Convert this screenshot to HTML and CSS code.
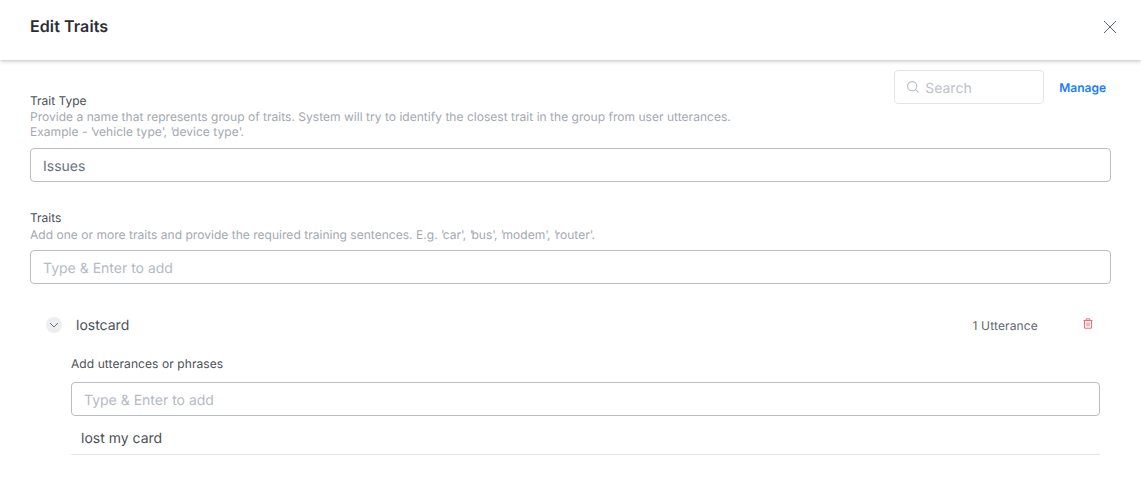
FILE: index.html
```html
<!DOCTYPE html>
<html lang="en">
<head>
<meta charset="utf-8">
<title>Edit Traits</title>
<link rel="stylesheet" href="styles.css">
</head>
<body>
<header class="header">
  <h1 class="title">Edit Traits</h1>
  <svg class="close" width="14" height="14" viewBox="0 0 14 14"><path d="M1 1L13 13M13 1L1 13" stroke="#5f6672" stroke-width="1" fill="none"/></svg>
</header>
<main class="content">
  <div class="tools">
    <div class="search">
      <svg width="14" height="14" viewBox="0 0 14 14" fill="none" stroke="#b5bac3" stroke-width="1.1"><circle cx="6.2" cy="6.2" r="4.6"/><path d="M9.6 9.6L12.4 12.4"/></svg>
      <span>Search</span>
    </div>
    <a class="manage">Manage</a>
  </div>
  <section class="type">
    <div class="label">Trait Type</div>
    <p class="hint">Provide a name that represents group of traits. System will try to identify the closest trait in the group from user utterances.<br>Example - <span class="q">'</span>vehicle type<span class="q">'</span>, <span class="q">'</span>device type<span class="q">'</span>.</p>
    <div class="field value">Issues</div>
  </section>
  <section class="traits">
    <div class="label">Traits</div>
    <p class="hint">Add one or more traits and provide the required training sentences. E.g. <span class="q">'</span>car<span class="q">'</span>, <span class="q">'</span>bus<span class="q">'</span>, <span class="q">'</span>modem<span class="q">'</span>, <span class="q">'</span>router<span class="q">'</span>.</p>
    <div class="field placeholder">Type &amp; Enter to add</div>
  </section>
  <section class="trait">
    <div class="trait-row">
      <span class="chevron"><svg width="10" height="6" viewBox="0 0 10 6" fill="none" stroke="#6b7280" stroke-width="1"><path d="M1 1L5 5L9 1"/></svg></span>
      <span class="trait-name">lostcard</span>
      <span class="count">1 Utterance</span>
      <svg class="trash" width="10" height="11" viewBox="0 0 10 11" fill="none" stroke="#ee6b7d" stroke-width="1"><path d="M0.5 2.5H9.5M3.2 2.5V0.8H6.8V2.5M1.5 2.5V10.2H8.5V2.5M4 4.5V8.3M6 4.5V8.3"/></svg>
    </div>
    <div class="utterances">
      <div class="label">Add utterances or phrases</div>
      <div class="field placeholder">Type &amp; Enter to add</div>
      <div class="utterance">lost my card</div>
    </div>
  </section>
</main>
</body>
</html>
```
FILE: styles.css
```css
* { box-sizing: border-box; }
html, body { margin: 0; height: 100%; }
body {
  background: #fff;
  color: #2b2d33;
  font-family: Inter, "Liberation Sans", sans-serif;
  text-rendering: geometricPrecision;
  overflow: hidden;
}
.header {
  height: 60px;
  padding: 0 24px 6px 30px;
  display: flex;
  align-items: center;
  justify-content: space-between;
  box-shadow: 0 1px 4px rgba(60, 66, 80, 0.35);
}
.title {
  margin: 0 0 2px;
  font-size: 16px;
  font-weight: 600;
  line-height: 24px;
  letter-spacing: 0.1px;
  color: #2b2d33;
}
.content { position: relative; padding: 33px 30px 0; }
.tools {
  position: absolute;
  top: 10px;
  right: 35px;
  display: flex;
  align-items: center;
  gap: 15px;
}
.search {
  width: 150px;
  height: 34px;
  padding: 2px 11px 0;
  display: flex;
  align-items: center;
  gap: 5px;
  border: 1px solid #e4e5e8;
  border-radius: 4px;
  font-size: 14px;
  color: #bdc1c9;
}
.search svg { margin-top: -2px; }
.manage { font-size: 12px; font-weight: 600; color: #1a7dff; }
.label { font-size: 12px; line-height: 16px; color: #4b5058; }
.hint { margin: 0; font-size: 12px; line-height: 15px; letter-spacing: 0.03px; color: #a3a8b1; }
.q { letter-spacing: -1.9px; }
.field {
  height: 34px;
  margin-top: 8px;
  padding: 2px 12px 0;
  display: flex;
  align-items: center;
  border: 1px solid #b9bcc2;
  border-radius: 4px;
  font-size: 14px;
}
.type .field { margin-top: 9px; }
.value { color: #6b7280; }
.placeholder { color: #b5bac3; }
.traits { margin-top: 28px; }
.traits .label { margin-bottom: 1px; }
.trait { padding-top: 25px; }
.trait-row {
  height: 32px;
  padding: 0 18px 0 16px;
  display: flex;
  align-items: center;
}
.chevron {
  width: 16px;
  height: 16px;
  border-radius: 50%;
  background: #eceef1;
  display: flex;
  align-items: center;
  justify-content: center;
}
.trait-name { margin-left: 14px; font-size: 14px; color: #4b5058; }
.count { margin-left: auto; font-size: 12px; letter-spacing: 0.15px; color: #5f6672; }
.trash { margin: 0 0 4px 45px; }
.utterances { padding: 15px 11px 0 41px; }
.utterances .label { letter-spacing: 0.08px; }
.utterances .field { margin-top: 10px; }
.utterance {
  height: 39px;
  padding: 7px 10px 0;
  display: flex;
  align-items: center;
  border-bottom: 1px solid #e4e5e8;
  font-size: 14px;
  color: #4b5058;
}
```
